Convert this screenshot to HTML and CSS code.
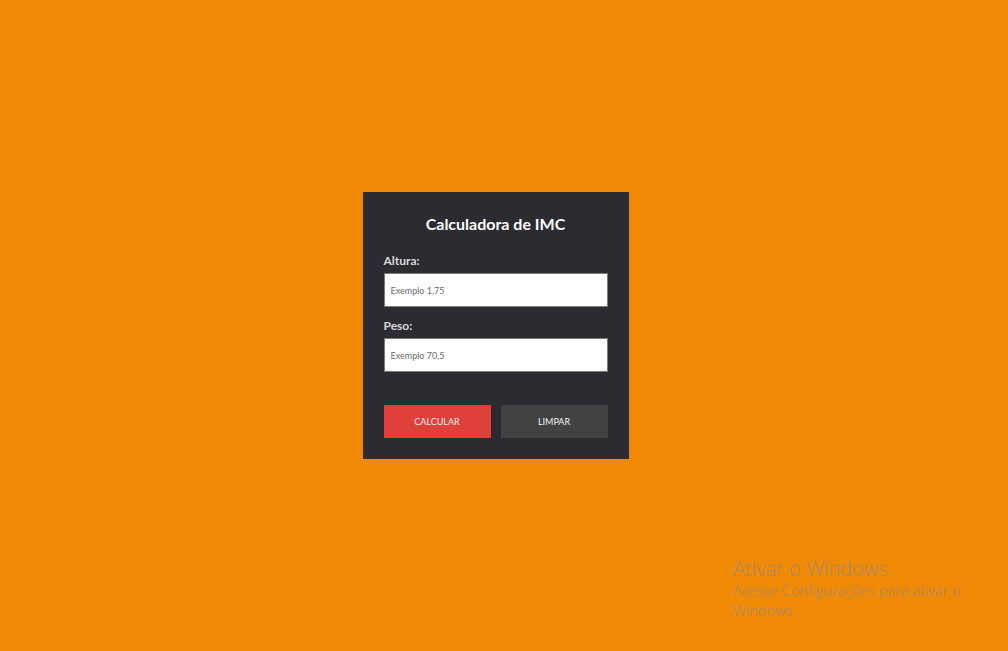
FILE: index.html
```html
<!DOCTYPE html>
<html lang="pt-BR">
<head>
<meta charset="utf-8">
<title>Calculadora de IMC</title>
<link rel="stylesheet" href="styles.css">
</head>
<body>
<main class="page">
  <section class="card">
    <h1 class="title">Calculadora de IMC</h1>
    <label class="label" for="altura">Altura:</label>
    <input class="input" id="altura" type="text" placeholder="Exemplo 1,75">
    <label class="label label-second" for="peso">Peso:</label>
    <input class="input" id="peso" type="text" placeholder="Exemplo 70,5">
    <div class="actions">
      <button class="btn btn-calc" type="button">CALCULAR</button>
      <button class="btn btn-clear" type="button">LIMPAR</button>
    </div>
  </section>
</main>
<div class="watermark">
  <div class="wm-title">Ativar o Windows</div>
  <div class="wm-text">Acesse Configurações para ativar o Windows.</div>
</div>
</body>
</html>
```
FILE: styles.css
```css
* { box-sizing: border-box; }
html, body {
  margin: 0;
  padding: 0;
  height: 100%;
}
body {
  background: #f08a04;
  font-family: Lato, "Open Sans", sans-serif;
  overflow: hidden;
}
.page {
  height: 651px;
  display: flex;
  justify-content: center;
  padding-top: 192px;
}
.card {
  width: 266px;
  height: 267px;
  background: #2c2b31;
  padding: 22px 21px 21px 21px;
  display: flex;
  flex-direction: column;
  margin-left: -17px;
}
.title {
  margin: 0;
  font-size: 16px;
  line-height: 20px;
  font-weight: 700;
  color: #ffffff;
  text-align: center;
}
.label {
  display: block;
  margin-top: 19px;
  font-size: 12px;
  line-height: 15px;
  font-weight: 700;
  color: #d8d8dc;
}
.label-second {
  margin-top: 11px;
}
.input {
  display: block;
  margin-top: 5px;
  width: 224px;
  height: 34px;
  border: 1px solid #7a7a7a;
  background: #ffffff;
  padding: 0 6px;
  font-family: Lato, sans-serif;
  font-size: 9px;
  color: #333;
  outline: none;
}
.input::placeholder {
  color: #6b6b6b;
  opacity: 1;
}
.actions {
  display: flex;
  gap: 10px;
  margin-top: 33px;
}
.btn {
  width: 107px;
  height: 33px;
  border: none;
  font-family: Lato, sans-serif;
  font-size: 9px;
  color: #f4f4f4;
  padding: 0;
  cursor: pointer;
}
.btn-calc { background: #e0403a; }
.btn-clear { background: #424242; }
.watermark {
  position: absolute;
  left: 733px;
  top: 556px;
  width: 260px;
  font-family: "Open Sans", "Noto Sans", sans-serif;
  font-weight: 300;
  color: #a58c70;
}
.wm-title {
  font-size: 20px;
  line-height: 25px;
}
.wm-text {
  font-size: 14.5px;
  line-height: 20px;
}
```
